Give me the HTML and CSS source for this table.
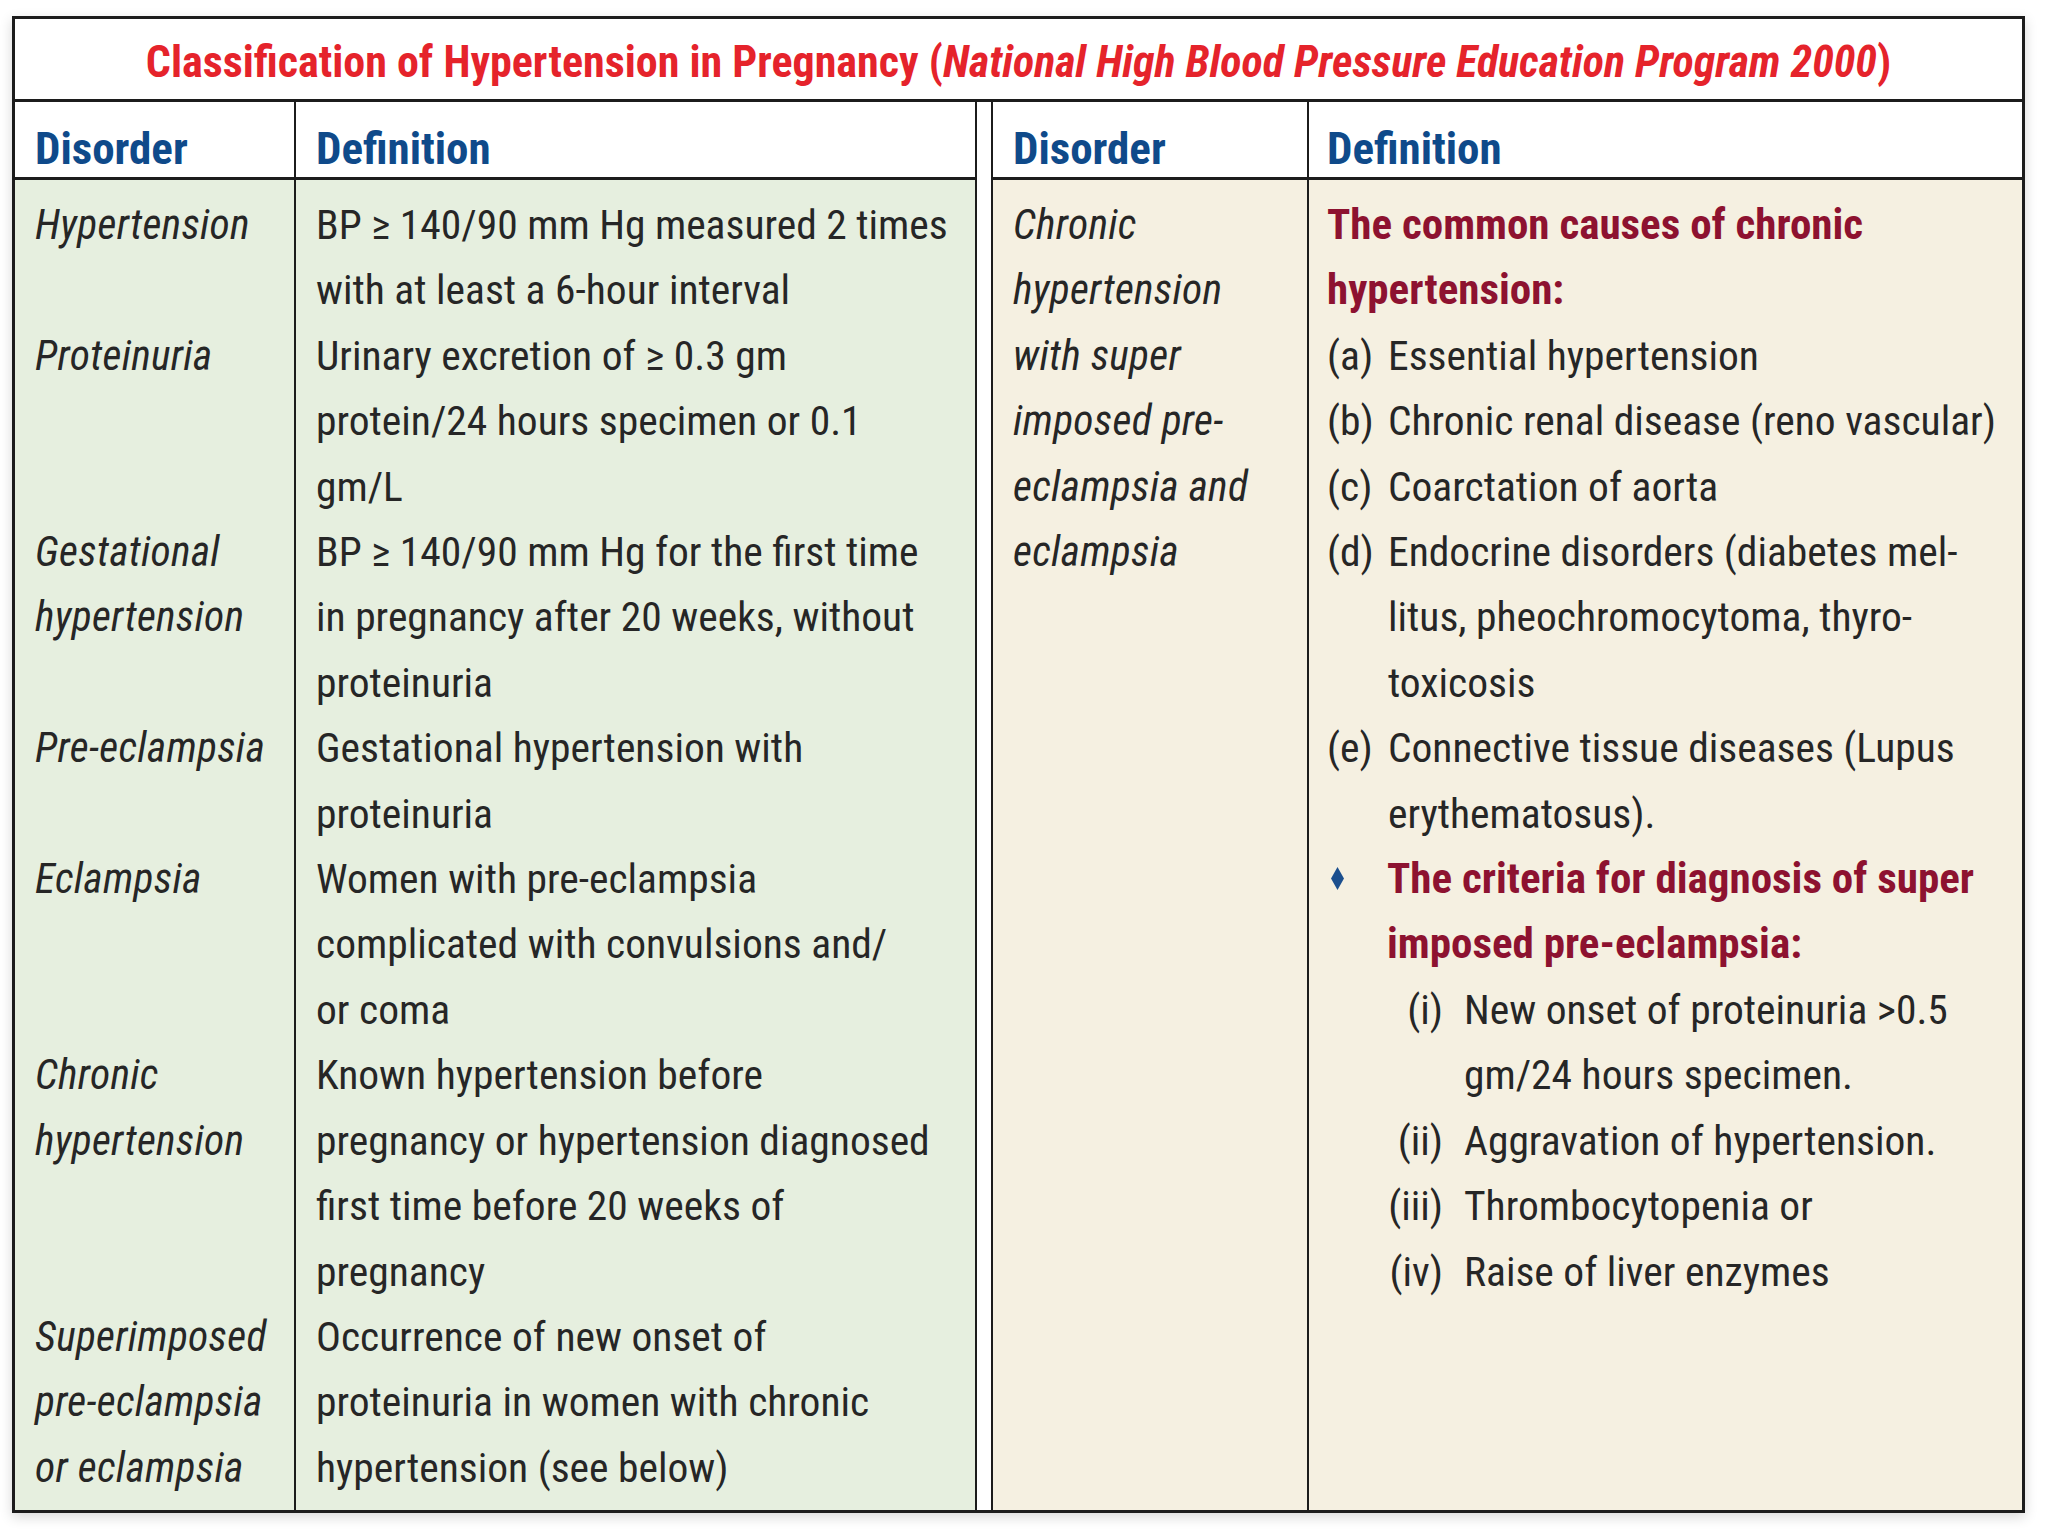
FILE: index.html
```html
<!DOCTYPE html>
<html lang="en">
<head>
<meta charset="utf-8">
<title>Classification of Hypertension in Pregnancy</title>
<link rel="stylesheet" href="styles.css">
</head>
<body>
<div class="sheet">
  <div class="title">Classification of Hypertension in Pregnancy (<em>National High Blood Pressure Education Program 2000</em>)</div>
  <div class="halves">
    <section class="half half-left">
      <div class="head">
        <div class="hcell c1">Disorder</div>
        <div class="hcell c2">Definition</div>
      </div>
      <div class="body grid-left">
        <div class="cell c1 term">Hypertension</div>
        <div class="cell c2">BP ≥ 140/90 mm Hg measured 2 times<br>with at least a 6-hour interval</div>

        <div class="cell c1 term">Proteinuria</div>
        <div class="cell c2">Urinary excretion of ≥ 0.3 gm<br>protein/24 hours specimen or 0.1<br>gm/L</div>

        <div class="cell c1 term">Gestational<br>hypertension</div>
        <div class="cell c2">BP ≥ 140/90 mm Hg for the first time<br>in pregnancy after 20 weeks, without<br>proteinuria</div>

        <div class="cell c1 term">Pre-eclampsia</div>
        <div class="cell c2">Gestational hypertension with<br>proteinuria</div>

        <div class="cell c1 term">Eclampsia</div>
        <div class="cell c2">Women with pre-eclampsia<br>complicated with convulsions and/<br>or coma</div>

        <div class="cell c1 term">Chronic<br>hypertension</div>
        <div class="cell c2">Known hypertension before<br>pregnancy or hypertension diagnosed<br>first time before 20 weeks of<br>pregnancy</div>

        <div class="cell c1 term">Superimposed<br>pre-eclampsia<br>or eclampsia</div>
        <div class="cell c2">Occurrence of new onset of<br>proteinuria in women with chronic<br>hypertension (see below)</div>
      </div>
    </section>

    <section class="half half-right">
      <div class="head">
        <div class="hcell c1">Disorder</div>
        <div class="hcell c2">Definition</div>
      </div>
      <div class="body grid-right">
        <div class="cell c1 term">Chronic<br>hypertension<br>with super<br>imposed pre-<br>eclampsia and<br>eclampsia</div>
        <div class="cell c2 def-right">
          <div class="subhead">The common causes of chronic<br>hypertension:</div>
          <div class="alpha">
            <span class="lbl">(a)</span><span>Essential hypertension</span>
            <span class="lbl">(b)</span><span>Chronic renal disease (reno vascular)</span>
            <span class="lbl">(c)</span><span>Coarctation of aorta</span>
            <span class="lbl">(d)</span><span>Endocrine disorders (diabetes mel-<br>litus, pheochromocytoma, thyro-<br>toxicosis</span>
            <span class="lbl">(e)</span><span>Connective tissue diseases (Lupus<br>erythematosus).</span>
          </div>
          <div class="bullet">
            <span class="diamond"><svg width="13" height="23" viewBox="0 0 13 23"><path d="M6.5 0 L13 11.5 L6.5 23 L0 11.5 Z" fill="#1b4f8e"/></svg></span>
            <span class="subhead">The criteria for diagnosis of super<br>imposed pre-eclampsia:</span>
          </div>
          <div class="roman">
            <span class="lbl">(i)</span><span>New onset of proteinuria &gt;0.5<br>gm/24 hours specimen.</span>
            <span class="lbl">(ii)</span><span>Aggravation of hypertension.</span>
            <span class="lbl">(iii)</span><span>Thrombocytopenia or</span>
            <span class="lbl">(iv)</span><span>Raise of liver enzymes</span>
          </div>
        </div>
      </div>
    </section>
  </div>
</div>
</body>
</html>
```
FILE: styles.css
```css
html, body {
  margin: 0;
  padding: 0;
  background: #ffffff;
}

body {
  font-family: "Roboto Condensed", "Roboto", "Liberation Sans", sans-serif;
  font-stretch: 75%;
  color: #262626;
  width: 2048px;
  height: 1536px;
  overflow: hidden;
}

.sheet {
  box-sizing: border-box;
  margin: 16px 0 0 12px;
  width: 2013px;
  height: 1497px;
  border: 3px solid #1c1c1c;
  display: flex;
  flex-direction: column;
  background: #ffffff;
  box-shadow: 0 4px 12px rgba(0, 0, 0, 0.16);
  overflow: hidden;
}

.title {
  height: 83px;
  box-sizing: border-box;
  padding-top: 5px;
  border-bottom: 3px solid #1c1c1c;
  text-align: center;
  font-weight: bold;
  font-size: 44px;
  line-height: 77px;
  color: #e5232b;
  white-space: nowrap;
}

.title em {
  font-style: italic;
}

.halves {
  flex: 1;
  display: flex;
  gap: 14px;
  min-height: 0;
}

.half {
  display: flex;
  flex-direction: column;
  min-width: 0;
  overflow: hidden;
}

.half-left {
  width: 962px;
  flex: none;
  border-right: 2px solid #1c1c1c;
  box-sizing: border-box;
}

.half-right {
  flex: 1;
  border-left: 2px solid #1c1c1c;
}

.head {
  display: grid;
  height: 78px;
  box-sizing: border-box;
  border-bottom: 3px solid #1c1c1c;
  background: #ffffff;
}

.half-left .head,
.grid-left {
  grid-template-columns: 281px 1fr;
}

.half-right .head,
.grid-right {
  grid-template-columns: 316px 1fr;
}

.hcell {
  font-weight: bold;
  font-size: 45px;
  line-height: 75px;
  padding-top: 9px;
  color: #0f4a8a;
  padding-left: 20px;
}

.c1 {
  border-right: 2px solid #1c1c1c;
}

.body {
  flex: 1;
  display: grid;
  font-size: 41.5px;
  line-height: 65.4px;
  white-space: nowrap;
}

.grid-left {
  background: #e6efdf;
  grid-template-rows: repeat(6, auto) 1fr;
}

.grid-right {
  background: #f5f0e1;
}

.cell {
  padding-left: 20px;
}

.grid-left .cell:nth-child(1),
.grid-left .cell:nth-child(2),
.grid-right .cell {
  padding-top: 12px;
}

.half-right .c2.hcell,
.def-right {
  padding-left: 18px;
}

.term {
  font-style: italic;
  letter-spacing: 0.3px;
}

.subhead {
  font-weight: bold;
  font-size: 43px;
  color: #8d1230;
}

.alpha {
  display: grid;
  grid-template-columns: 61px 1fr;
}

.bullet {
  display: grid;
  grid-template-columns: 60px 1fr;
}

.diamond {
  display: flex;
  align-items: center;
  height: 65.4px;
  padding-left: 4px;
}

.diamond svg {
  display: block;
}

.roman {
  display: grid;
  grid-template-columns: 116px 1fr;
  column-gap: 21px;
}

.roman .lbl {
  text-align: right;
}
```
